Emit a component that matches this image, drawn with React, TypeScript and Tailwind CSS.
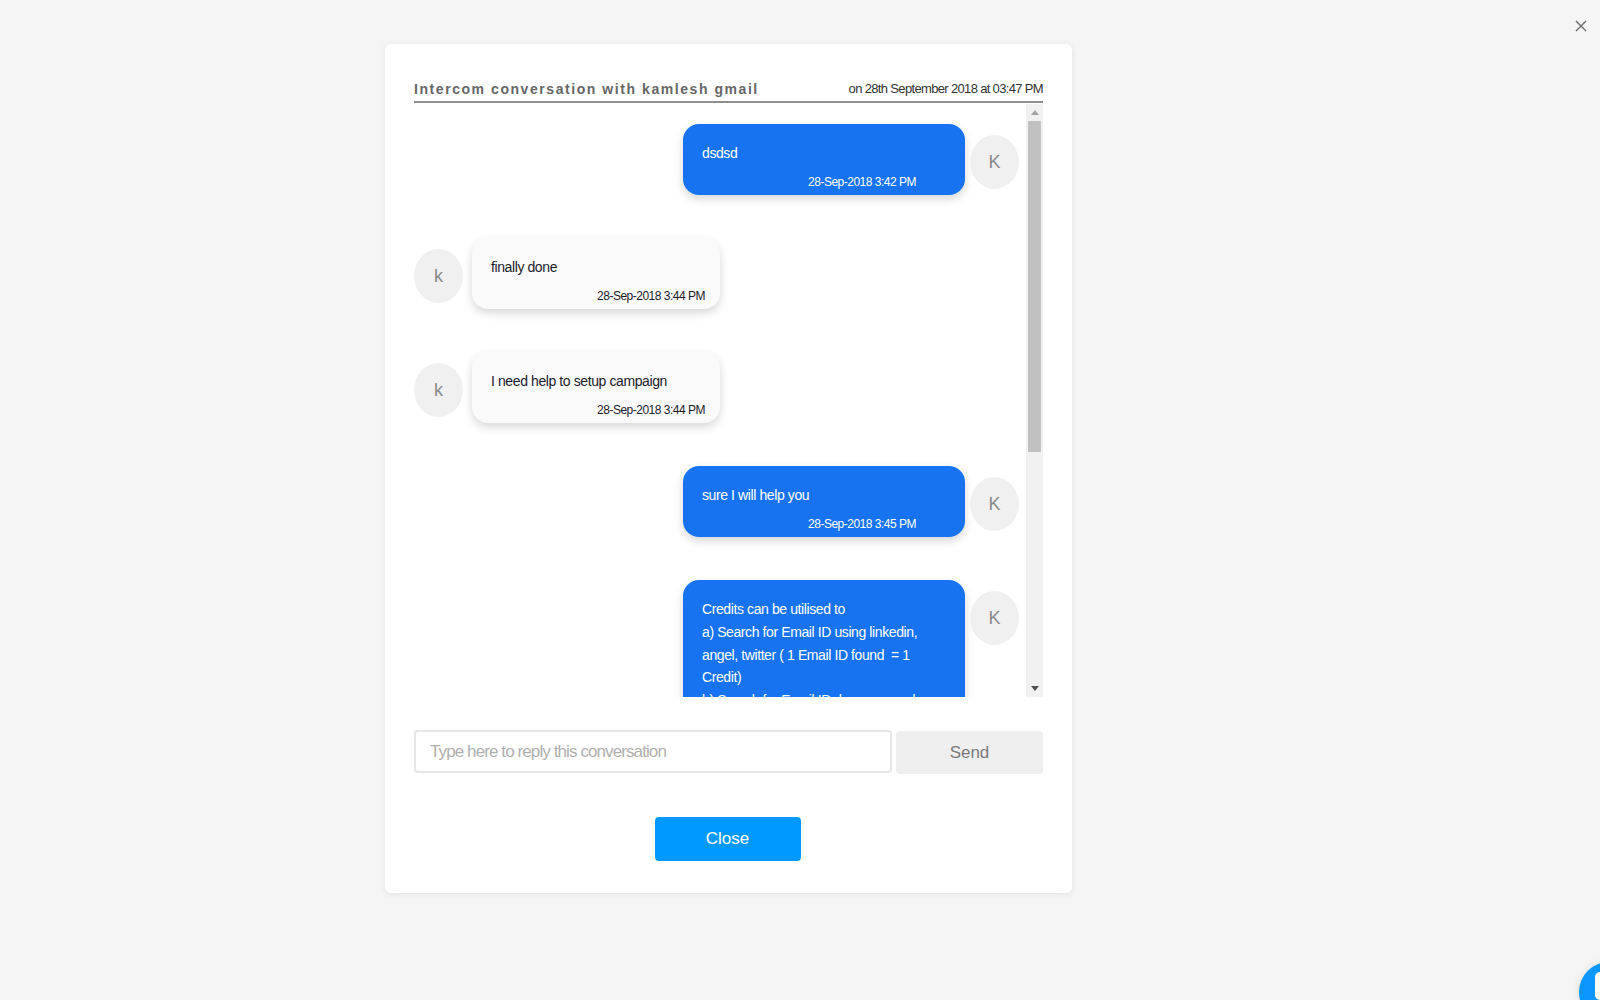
const font = { fontFamily: '"Liberation Sans", Arial, sans-serif' };

type Msg = { side: 'me' | 'them'; letter: string; time?: string; lines: string[] };

const messages: Msg[] = [
  { side: 'me', letter: 'K', time: '28-Sep-2018 3:42 PM', lines: ['dsdsd'] },
  { side: 'them', letter: 'k', time: '28-Sep-2018 3:44 PM', lines: ['finally done'] },
  { side: 'them', letter: 'k', time: '28-Sep-2018 3:44 PM', lines: ['I need help to setup campaign'] },
  { side: 'me', letter: 'K', time: '28-Sep-2018 3:45 PM', lines: ['sure I will help you'] },
  {
    side: 'me',
    letter: 'K',
    lines: [
      'Credits can be utilised to',
      'a) Search for Email ID using linkedin,',
      'angel, twitter ( 1 Email ID found  = 1',
      'Credit)',
      'b) Search for Email ID- by name and',
    ],
  },
];

function Avatar({ letter }: { letter: string }) {
  return (
    <div className="mt-[11px] flex h-[54px] w-[49px] shrink-0 items-center justify-center rounded-[50%] bg-[#f0f0f0] text-[18px] text-[#8a8a8a]">
      {letter}
    </div>
  );
}

function Bubble({ m }: { m: Msg }) {
  const me = m.side === 'me';
  return (
    <div
      className={
        me
          ? 'w-[282px] shrink-0 rounded-[16px] bg-[#1873f2] pl-[19px] pr-[15px] pt-[18px] pb-[6px] text-white shadow-[0_4px_10px_rgba(0,0,0,0.16)]'
          : 'w-[248px] shrink-0 rounded-[16px] bg-[#fafafa] pl-[19px] pr-[15px] pt-[18px] pb-[6px] text-[#1b1b2a] shadow-[0_4px_10px_rgba(0,0,0,0.16)]'
      }
    >
      <div className="text-[14px] leading-[22.7px] tracking-[-0.4px] whitespace-pre">
        {m.lines.map((l) => (
          <div key={l}>{l}</div>
        ))}
      </div>
      {m.time && (
        <div className={me ? 'mt-[10px] pr-[34px] text-right text-[12px] leading-[14px] tracking-[-0.5px]' : 'mt-[10px] text-right text-[12px] leading-[14px] tracking-[-0.5px]'}>
          {m.time}
        </div>
      )}
    </div>
  );
}

function Row({ m }: { m: Msg }) {
  if (m.side === 'me') {
    return (
      <div className="flex items-start justify-end gap-[5px] pr-[7px]">
        <Bubble m={m} />
        <Avatar letter={m.letter} />
      </div>
    );
  }
  return (
    <div className="flex items-start gap-[9px]">
      <Avatar letter={m.letter} />
      <Bubble m={m} />
    </div>
  );
}

export default function App() {
  return (
    <div className="relative h-screen w-full overflow-hidden bg-[#f5f5f5] pl-[385px] pt-[44px]" style={font}>
      <svg className="absolute left-[1575px] top-[20px]" width="12" height="12" viewBox="0 0 12 12" fill="none" stroke="#6b6b6b" strokeWidth="1.4">
        <path d="M1 1 L11 11 M11 1 L1 11" />
      </svg>

      <div className="flex h-[849px] w-[687px] flex-col rounded-[6px] bg-white px-[29px] pt-[34px] shadow-[0_1px_6px_rgba(0,0,0,0.08)]">
        <div className="flex h-[25px] items-end justify-between border-b-2 border-[#8f8f8f] pb-[3px]">
          <span className="text-[14px] font-bold leading-[18px] tracking-[1.56px] text-[#666666]">Intercom conversation with kamlesh gmail</span>
          <span className="text-[13px] leading-[18px] tracking-[-0.66px] text-[#333333]">on 28th September 2018 at 03:47 PM</span>
        </div>

        <div className="mt-[1px] flex h-[593px] overflow-hidden">
          <div className="flex min-w-0 flex-1 flex-col gap-[43.4px] overflow-hidden pt-[20px]">
            {messages.map((m, i) => (
              <Row key={i} m={m} />
            ))}
          </div>
          <div className="flex w-[17px] shrink-0 flex-col items-center bg-[#f1f1f1]">
            <div className="flex h-[17px] items-center justify-center">
              <svg width="8" height="5" viewBox="0 0 8 5"><path d="M4 0 L8 5 L0 5 Z" fill="#a3a3a3" /></svg>
            </div>
            <div className="h-[331px] w-[13px] bg-[#c1c1c1]" />
            <div className="flex-1" />
            <div className="flex h-[17px] items-center justify-center">
              <svg width="8" height="5" viewBox="0 0 8 5"><path d="M0 0 L8 0 L4 5 Z" fill="#505050" /></svg>
            </div>
          </div>
        </div>

        <div className="mt-[33px] flex gap-[4px]">
          <div className="flex h-[43px] w-[478px] items-center rounded-[4px] border-2 border-[#e6e6e6] pl-[14px] text-[17px] tracking-[-0.9px] text-[#b0b0b0]">
            Type here to reply this conversation
          </div>
          <div className="mt-[1px] flex h-[43px] flex-1 items-center justify-center rounded-[4px] bg-[#efefef] text-[17px] tracking-[-0.1px] text-[#7a7a7a]">
            Send
          </div>
        </div>

        <div className="mt-[43px] flex justify-center pr-[2px]">
          <div className="flex h-[44px] w-[146px] items-center justify-center rounded-[4px] bg-[#0099ff] text-[17px] font-medium text-white">
            Close
          </div>
        </div>
      </div>

      <div className="absolute left-[1579px] top-[962px] h-[60px] w-[60px] rounded-full bg-[#0a97ff] shadow-[0_1px_8px_rgba(0,0,0,0.12)]">
        <div className="absolute left-[16px] top-[10px] h-[28px] w-[24px] rounded-[5px] bg-white" />
      </div>
    </div>
  );
}
